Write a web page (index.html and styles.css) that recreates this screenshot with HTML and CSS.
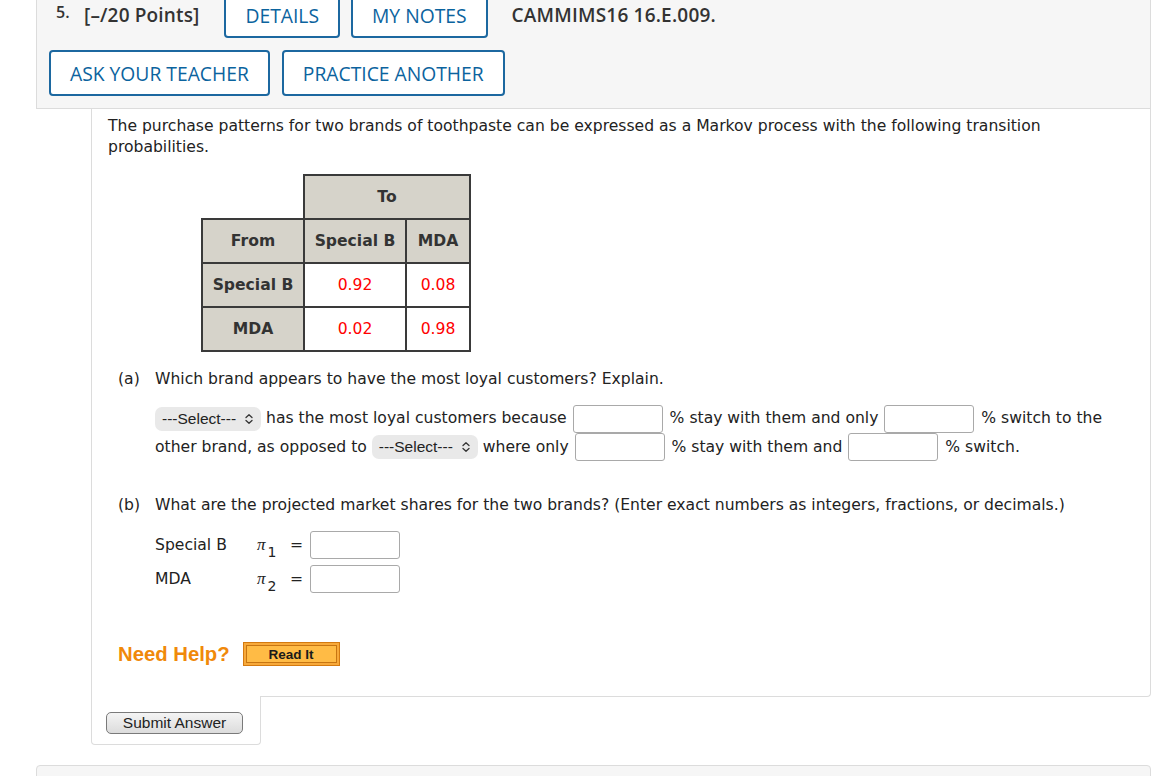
FILE: index.html
```html
<!DOCTYPE html>
<html>
<head>
<meta charset="utf-8">
<link rel="stylesheet" href="styles.css">
</head>
<body>
<div class="page">
  <div class="qhead">
    <div class="hrow">
      <span class="qnum">5.</span>
      <span class="qpts">[–/20 Points]</span>
      <span class="btns">
        <button class="hbtn">DETAILS</button>
        <button class="hbtn">MY NOTES</button>
      </span>
      <span class="qid">CAMMIMS16 16.E.009.</span>
    </div>
    <div class="hrow row2">
      <button class="hbtn">ASK YOUR TEACHER</button>
      <button class="hbtn">PRACTICE ANOTHER</button>
    </div>
  </div>

  <div class="qbody">
    <p class="intro">The purchase patterns for two brands of toothpaste can be expressed as a Markov process with the following transition probabilities.</p>

    <table class="mtable">
      <tr>
        <td class="blank"></td>
        <th colspan="2">To</th>
      </tr>
      <tr>
        <th class="c1">From</th>
        <th class="c2">Special B</th>
        <th class="c3">MDA</th>
      </tr>
      <tr>
        <th>Special B</th>
        <td>0.92</td>
        <td>0.08</td>
      </tr>
      <tr>
        <th>MDA</th>
        <td>0.02</td>
        <td>0.98</td>
      </tr>
    </table>

    <div class="part part-a">
      <div class="ptitle"><span class="plabel">(a)</span><span>Which brand appears to have the most loyal customers? Explain.</span></div>
      <div class="answer">
        <span class="sel">---Select---<svg class="chev" width="10" height="12" viewBox="0 0 10 12"><path d="M2 4.5 L5 1.8 L8 4.5 M2 7.5 L5 10.2 L8 7.5" fill="none" stroke="#333" stroke-width="1.3" stroke-linecap="round" stroke-linejoin="round"/></svg></span> has the most loyal customers because <input class="inp" type="text"> % stay with them and only <input class="inp" type="text"> % switch to the other brand, as opposed to <span class="sel">---Select---<svg class="chev" width="10" height="12" viewBox="0 0 10 12"><path d="M2 4.5 L5 1.8 L8 4.5 M2 7.5 L5 10.2 L8 7.5" fill="none" stroke="#333" stroke-width="1.3" stroke-linecap="round" stroke-linejoin="round"/></svg></span> where only <input class="inp" type="text"> % stay with them and <input class="inp" type="text"> % switch.
      </div>
    </div>

    <div class="part part-b">
      <div class="ptitle"><span class="plabel">(b)</span><span>What are the projected market shares for the two brands? (Enter exact numbers as integers, fractions, or decimals.)</span></div>
      <div class="shares">
        <div class="srow"><span class="sname">Special B</span><span class="pi">π<sub>1</sub></span><span class="eq">=</span><input class="inp" type="text"></div>
        <div class="srow"><span class="sname">MDA</span><span class="pi">π<sub>2</sub></span><span class="eq">=</span><input class="inp" type="text"></div>
      </div>
    </div>

    <div class="help">
      <span class="needhelp">Need Help?</span>
      <button class="readit"><span>Read It</span></button>
    </div>
  </div>

  <div class="submitbox">
    <button class="submit">Submit Answer</button>
  </div>

  <div class="nextq"></div>
</div>
</body>
</html>
```

FILE: styles.css
```css
html, body {
  margin: 0;
  padding: 0;
  background: #fff;
}
body {
  font-family: "DejaVu Sans", Verdana, sans-serif;
  color: #222;
  overflow: hidden;
}
.page {
  margin-left: 36px;
  width: 1115px;
}
.qhead {
  margin-top: -9px;
  background: #f6f6f6;
  border: 1px solid #dcdcdc;
  padding: 0 0 12px 12px;
  font-family: "Open Sans", sans-serif;
  color: #333;
}
.hrow {
  display: flex;
  align-items: center;
  height: 46px;
}
.row2 {
  margin-top: 12px;
  gap: 12px;
}
.qnum {
  font-weight: 600;
  font-size: 16px;
  margin-left: 7px;
  width: 28px;
  position: relative;
  top: -3px;
}
.qpts {
  font-weight: 600;
  font-size: 19px;
  letter-spacing: 0.15px;
  margin-right: 25px;
}
.btns {
  display: flex;
  gap: 11px;
  margin-right: 24px;
}
.hbtn {
  height: 46px;
  box-sizing: border-box;
  border: 2px solid #1c68a0;
  border-radius: 4px;
  background: #fff;
  color: #0b639e;
  font-family: "Open Sans", sans-serif;
  font-weight: 500;
  font-size: 19.3px;
  padding: 0 19px;
  letter-spacing: 0;
}
.qid {
  font-weight: 600;
  font-size: 19px;
  letter-spacing: 0.2px;
  color: #333;
}
.qbody {
  margin-left: 55px;
  border: 1px solid #dcdcdc;
  border-top: none;
  border-bottom-right-radius: 4px;
  padding: 7px 20px 30px 16px;
  font-size: 15.6px;
  line-height: 21px;
}
.intro {
  margin: 0;
  padding-right: 60px;
}
.mtable {
  margin: 16px 0 0 93px;
  border-collapse: collapse;
  font-size: 15.6px;
}
.mtable th, .mtable td {
  height: 42px;
  padding: 0;
  text-align: center;
  border: 2px solid #3a3a3a;
}
.mtable th {
  background: #d6d3ca;
  color: #333;
  font-weight: 700;
}
.mtable td {
  color: #f00;
  background: #fff;
}
.mtable td.blank {
  border: none;
  border-right: 2px solid #3a3a3a;
  border-bottom: 2px solid #3a3a3a;
  background: transparent;
}
.mtable .c1 { width: 100px; }
.mtable .c2 { width: 100px; }
.mtable .c3 { width: 62px; }

.part {
  margin-left: 10px;
}
.part-a {
  margin-top: 17px;
}
.ptitle {
  display: flex;
}
.plabel {
  width: 37px;
  flex: none;
}
.answer {
  margin: 14px 0 0 37px;
  line-height: 28px;
}
.sel {
  display: inline-flex;
  align-items: center;
  gap: 8px;
  height: 24px;
  padding: 0 7px;
  background: #e9e9e9;
  border-radius: 7px;
  font-family: "Liberation Sans", Arial, sans-serif;
  font-size: 15.5px;
  color: #222;
  vertical-align: middle;
  line-height: 24px;
}
.chev {
  display: block;
}
.inp {
  width: 90px;
  height: 28px;
  box-sizing: border-box;
  border: 1px solid #a9a9a9;
  border-radius: 3px;
  vertical-align: middle;
  margin: 0 2px 0 1px;
  padding: 0;
  background: #fff;
}
.part-b {
  margin-top: 34px;
}
.shares {
  margin: 15px 0 0 37px;
  display: flex;
  flex-direction: column;
  gap: 6px;
}
.srow {
  display: flex;
  align-items: center;
  height: 28px;
}
.sname {
  width: 102px;
}
.pi {
  font-family: "Liberation Serif", serif;
  font-style: italic;
  font-size: 17px;
  width: 33px;
  position: relative;
  top: -1px;
}
.pi sub {
  font-family: "DejaVu Sans", sans-serif;
  font-style: normal;
  font-size: 14px;
  vertical-align: -7px;
  line-height: 0;
  margin-left: 2px;
}
.eq {
  width: 20px;
}
.shares .inp {
  margin: 0;
}
.help {
  margin: 49px 0 0 10px;
  display: flex;
  align-items: center;
  gap: 13px;
}
.needhelp {
  font-family: "Liberation Sans", Arial, sans-serif;
  font-weight: 700;
  font-size: 20.3px;
  color: #f0890a;
}
.readit {
  width: 97px;
  height: 24px;
  padding: 2px;
  box-sizing: border-box;
  border: 1px solid #d47a10;
  background: #f7a93a;
  display: flex;
}
.readit span {
  flex: 1;
  display: flex;
  align-items: center;
  justify-content: center;
  border: 1px solid #c77512;
  background: #ffbb45;
  font-family: "Liberation Sans", Arial, sans-serif;
  font-weight: 700;
  font-size: 13.5px;
  color: #1a1a1a;
}
.submitbox {
  position: relative;
  margin: -1px 0 0 55px;
  width: 170px;
  box-sizing: border-box;
  background: #fff;
  border: 1px solid #dcdcdc;
  border-top: none;
  border-radius: 0 0 4px 4px;
  padding: 16px 0 10px 14px;
}
.submit {
  display: block;
  width: 137px;
  height: 22px;
  box-sizing: border-box;
  border: 1px solid #7a7a7a;
  border-radius: 5px;
  background: linear-gradient(#f4f4f4, #dcdcdc);
  font-family: "Liberation Sans", Arial, sans-serif;
  font-size: 15.5px;
  color: #222;
  padding: 0;
}
.nextq {
  margin-top: 20px;
  height: 30px;
  background: #f6f6f6;
  border: 1px solid #dcdcdc;
  border-radius: 4px 4px 0 0;
}
```
